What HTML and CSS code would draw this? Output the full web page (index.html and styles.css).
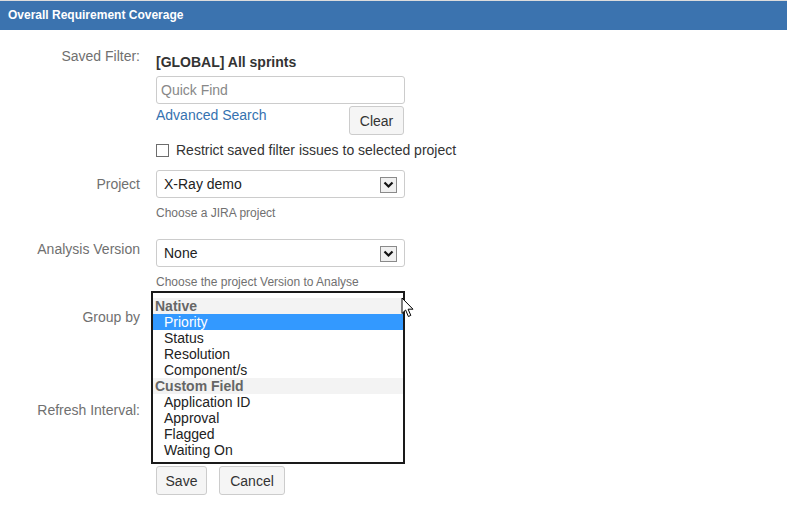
FILE: index.html
```html
<!DOCTYPE html>
<html>
<head>
<meta charset="utf-8">
<link rel="stylesheet" href="styles.css">
</head>
<body>
<div class="header">Overall Requirement Coverage</div>
<div class="form">
  <div class="row row-saved">
    <div class="label">Saved Filter:</div>
    <div class="field field-saved">
      <div class="saved-name">[GLOBAL] All sprints</div>
      <div class="input"><span class="placeholder">Quick Find</span></div>
      <div class="actions">
        <a class="link">Advanced Search</a>
        <span class="btn btn-clear">Clear</span>
      </div>
      <div class="check-row">
        <span class="checkbox"></span>
        <span class="check-text">Restrict saved filter issues to selected project</span>
      </div>
    </div>
  </div>

  <div class="row row-project">
    <div class="label label-mid">Project</div>
    <div class="field">
      <div class="select"><span class="select-text">X-Ray demo</span><span class="arrow"><svg width="11" height="8" viewBox="0 0 11 8"><path d="M1.5 1.5 L5.5 5.5 L9.5 1.5" fill="none" stroke="#111" stroke-width="2.2"/></svg></span></div>
      <div class="help">Choose a JIRA project</div>
    </div>
  </div>

  <div class="row row-version">
    <div class="label">Analysis Version</div>
    <div class="field">
      <div class="select"><span class="select-text">None</span><span class="arrow"><svg width="11" height="8" viewBox="0 0 11 8"><path d="M1.5 1.5 L5.5 5.5 L9.5 1.5" fill="none" stroke="#111" stroke-width="2.2"/></svg></span></div>
      <div class="help">Choose the project Version to Analyse</div>
    </div>
  </div>

  <div class="row row-group">
    <div class="label label-mid">Group by</div>
    <div class="field field-group">
      <div class="select"></div>
      <div class="popup">
        <div class="opt-group">Native</div>
        <div class="opt selected">Priority</div>
        <div class="opt">Status</div>
        <div class="opt">Resolution</div>
        <div class="opt">Component/s</div>
        <div class="opt-group">Custom Field</div>
        <div class="opt">Application ID</div>
        <div class="opt">Approval</div>
        <div class="opt">Flagged</div>
        <div class="opt">Waiting On</div>
      </div>
      <svg class="cursor" width="14" height="21" viewBox="0 0 14 21"><path d="M1 1 L1 16.5 L4.6 13 L7.4 19.5 L9.8 18.4 L7.1 12.2 L12 12.2 Z" fill="#fff" stroke="#000" stroke-width="1" stroke-linejoin="miter"/></svg>
    </div>
  </div>

  <div class="row row-refresh">
    <div class="label label-mid">Refresh Interval:</div>
    <div class="field">
      <div class="select"></div>
    </div>
  </div>

  <div class="row row-buttons">
    <div class="label"></div>
    <div class="field buttons">
      <span class="btn btn-save">Save</span>
      <span class="btn btn-cancel">Cancel</span>
    </div>
  </div>
</div>
</body>
</html>
```

FILE: styles.css
```css
html, body {
  margin: 0;
  padding: 0;
  background: #fff;
  font-family: "Liberation Sans", Arial, sans-serif;
  font-size: 14px;
  color: #333;
}

.header {
  border-top: 1px solid #dcdcdc;
  height: 29px;
  line-height: 29px;
  background: #3b73af;
  color: #fff;
  font-weight: bold;
  font-size: 12px;
  padding-left: 8px;
}

.form {
  display: flex;
  flex-direction: column;
  padding-top: 16px;
}

.row {
  display: grid;
  grid-template-columns: 140px 249px;
  column-gap: 16px;
  align-items: start;
}

.label {
  text-align: right;
  color: #707070;
  line-height: 20px;
  white-space: nowrap;
}

.label-mid {
  padding-top: 4px;
}

.field {
  display: flex;
  flex-direction: column;
}

.field-saved {
  padding-top: 6px;
}

.saved-name {
  font-weight: bold;
  line-height: 20px;
  color: #333;
}

.input {
  margin-top: 4px;
  height: 26px;
  border: 1px solid #ccc;
  border-radius: 3px;
  line-height: 26px;
  padding-left: 4px;
}

.placeholder {
  color: #888;
}

.actions {
  display: flex;
  justify-content: space-between;
  align-items: flex-start;
}

.link {
  margin-top: 1px;
  line-height: 20px;
  color: #3572b0;
}

.btn {
  display: inline-flex;
  align-items: center;
  justify-content: center;
  height: 27px;
  border: 1px solid #ccc;
  border-radius: 3px;
  background: #f5f5f5;
  color: #333;
}

.btn-clear {
  margin-top: 2px;
  margin-right: 1px;
  width: 53px;
}

.check-row {
  display: flex;
  align-items: center;
  margin-top: 5px;
  height: 20px;
}

.checkbox {
  flex: 0 0 auto;
  width: 11px;
  height: 11px;
  border: 1px solid #6d6d6d;
  background: #fff;
  margin-right: 7px;
}

.check-text {
  white-space: nowrap;
  color: #333;
}

.row-project {
  margin-top: 10px;
}

.row-version {
  margin-top: 18px;
}

.row-group {
  margin-top: 13px;
  position: relative;
  z-index: 5;
}

.row-refresh {
  margin-top: 65px;
}

.row-buttons {
  margin-top: 42px;
}

.select {
  position: relative;
  height: 26px;
  border: 1px solid #ccc;
  border-radius: 3px;
  line-height: 26px;
  padding-left: 7px;
  color: #222;
}

.arrow {
  position: absolute;
  right: 7px;
  top: 6px;
  width: 15px;
  height: 14px;
  border: 1px solid #8a8a8a;
  background: #f0f0f0;
  display: flex;
  align-items: center;
  justify-content: center;
}

.help {
  margin-top: 7px;
  font-size: 12px;
  line-height: 16px;
  color: #707070;
}

.field-group {
  position: relative;
}

.popup {
  position: absolute;
  left: -5px;
  top: -12px;
  width: 250px;
  padding: 5px 0 4px;
  border: 2px solid #1a1a1a;
  background: #fff;
}

.opt-group {
  height: 16px;
  line-height: 16px;
  padding-left: 2px;
  background: #f3f3f3;
  color: #666;
  font-weight: bold;
}

.opt {
  height: 16px;
  line-height: 16px;
  padding-left: 11px;
  color: #222;
}

.opt.selected {
  background: #3399ff;
  color: #fff;
}

.cursor {
  position: absolute;
  left: 245px;
  top: -6px;
}

.buttons {
  flex-direction: row;
  gap: 12px;
}

.btn-save {
  width: 49px;
}

.btn-cancel {
  width: 64px;
}
```
